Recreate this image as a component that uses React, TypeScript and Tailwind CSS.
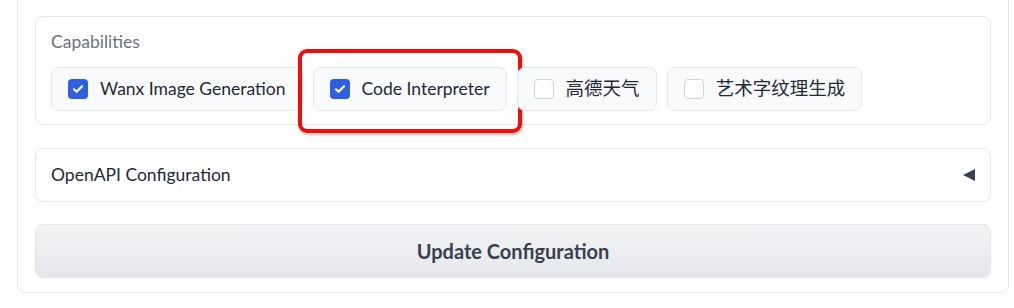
import React from 'react';

const capabilities = [
  { label: 'Wanx Image Generation', checked: true },
  { label: 'Code Interpreter', checked: true, highlight: true },
  { label: '高德天气', checked: false, cjk: true },
  { label: '艺术字纹理生成', checked: false, cjk: true },
];

function Checkbox({ checked }: { checked: boolean }) {
  if (checked) {
    return (
      <span className="flex h-[20px] w-[20px] shrink-0 items-center justify-center rounded-[4px] bg-[#2f5fe0]">
        <svg viewBox="0 0 16 16" className="h-[16px] w-[16px]" fill="none">
          <path d="M4 8.3l2.6 2.5 5.4-5.6" stroke="white" strokeWidth="2.2" strokeLinecap="round" strokeLinejoin="round" />
        </svg>
      </span>
    );
  }
  return <span className="h-[20px] w-[20px] shrink-0 rounded-[4px] border border-[#d1d5db] bg-white" />;
}

export default function App() {
  return (
    <div
      className="h-[308px] w-[1014px] overflow-hidden bg-white pl-[17px] text-[#1f2937]"
      style={{ fontFamily: '"Lato", "Noto Sans CJK SC", sans-serif' }}
    >
      <div className="w-[992px] rounded-b-[8px] border-x border-b border-[#e5e7eb] px-[17px] pt-[16px] pb-[14px]">
        {/* Capabilities */}
        <div className="rounded-[8px] border border-[#e5e7eb] px-[15px] pt-[13px] pb-[13px]">
          <div className="text-[17.5px] leading-[24px] text-[#6b7280]">Capabilities</div>
          <div className="mt-[13px] flex gap-[10px]">
            {capabilities.map((c) => (
              <div key={c.label} className="relative">
                <div className="flex h-[44px] items-center gap-[12px] rounded-[8px] border border-[#e5e7eb] bg-[#f9fafb] pl-[16px] pr-[16px] text-[17.5px]">
                  <Checkbox checked={c.checked} />
                  <span className={c.cjk ? 'text-[18.5px]' : ''}>{c.label}</span>
                </div>
                {c.highlight && (
                  <div className="pointer-events-none absolute left-[-15px] right-[-15px] top-[-18px] bottom-[-22px] rounded-[9px] border-[4px] border-[#f20c0c] shadow-[1px_2px_3px_rgba(0,0,0,0.25)]" />
                )}
              </div>
            ))}
          </div>
        </div>

        {/* OpenAPI Configuration */}
        <div className="mt-[23px] flex h-[54px] items-center justify-between rounded-[8px] border border-[#e5e7eb] pl-[15px] pr-[15px]">
          <span className="text-[17.5px] text-[#1f2937]">OpenAPI Configuration</span>
          <svg viewBox="0 0 12 12" className="h-[12px] w-[12px]">
            <path d="M0 6L12 0V12Z" fill="#374151" />
          </svg>
        </div>

        {/* Update button */}
        <button className="mt-[22px] flex h-[54px] w-full items-center justify-center rounded-[8px] border border-[#e5e7eb] bg-gradient-to-b from-[#f3f4f6] to-[#e5e7eb] text-[20px] font-bold text-[#374151]">
          Update Configuration
        </button>
      </div>
    </div>
  );
}
